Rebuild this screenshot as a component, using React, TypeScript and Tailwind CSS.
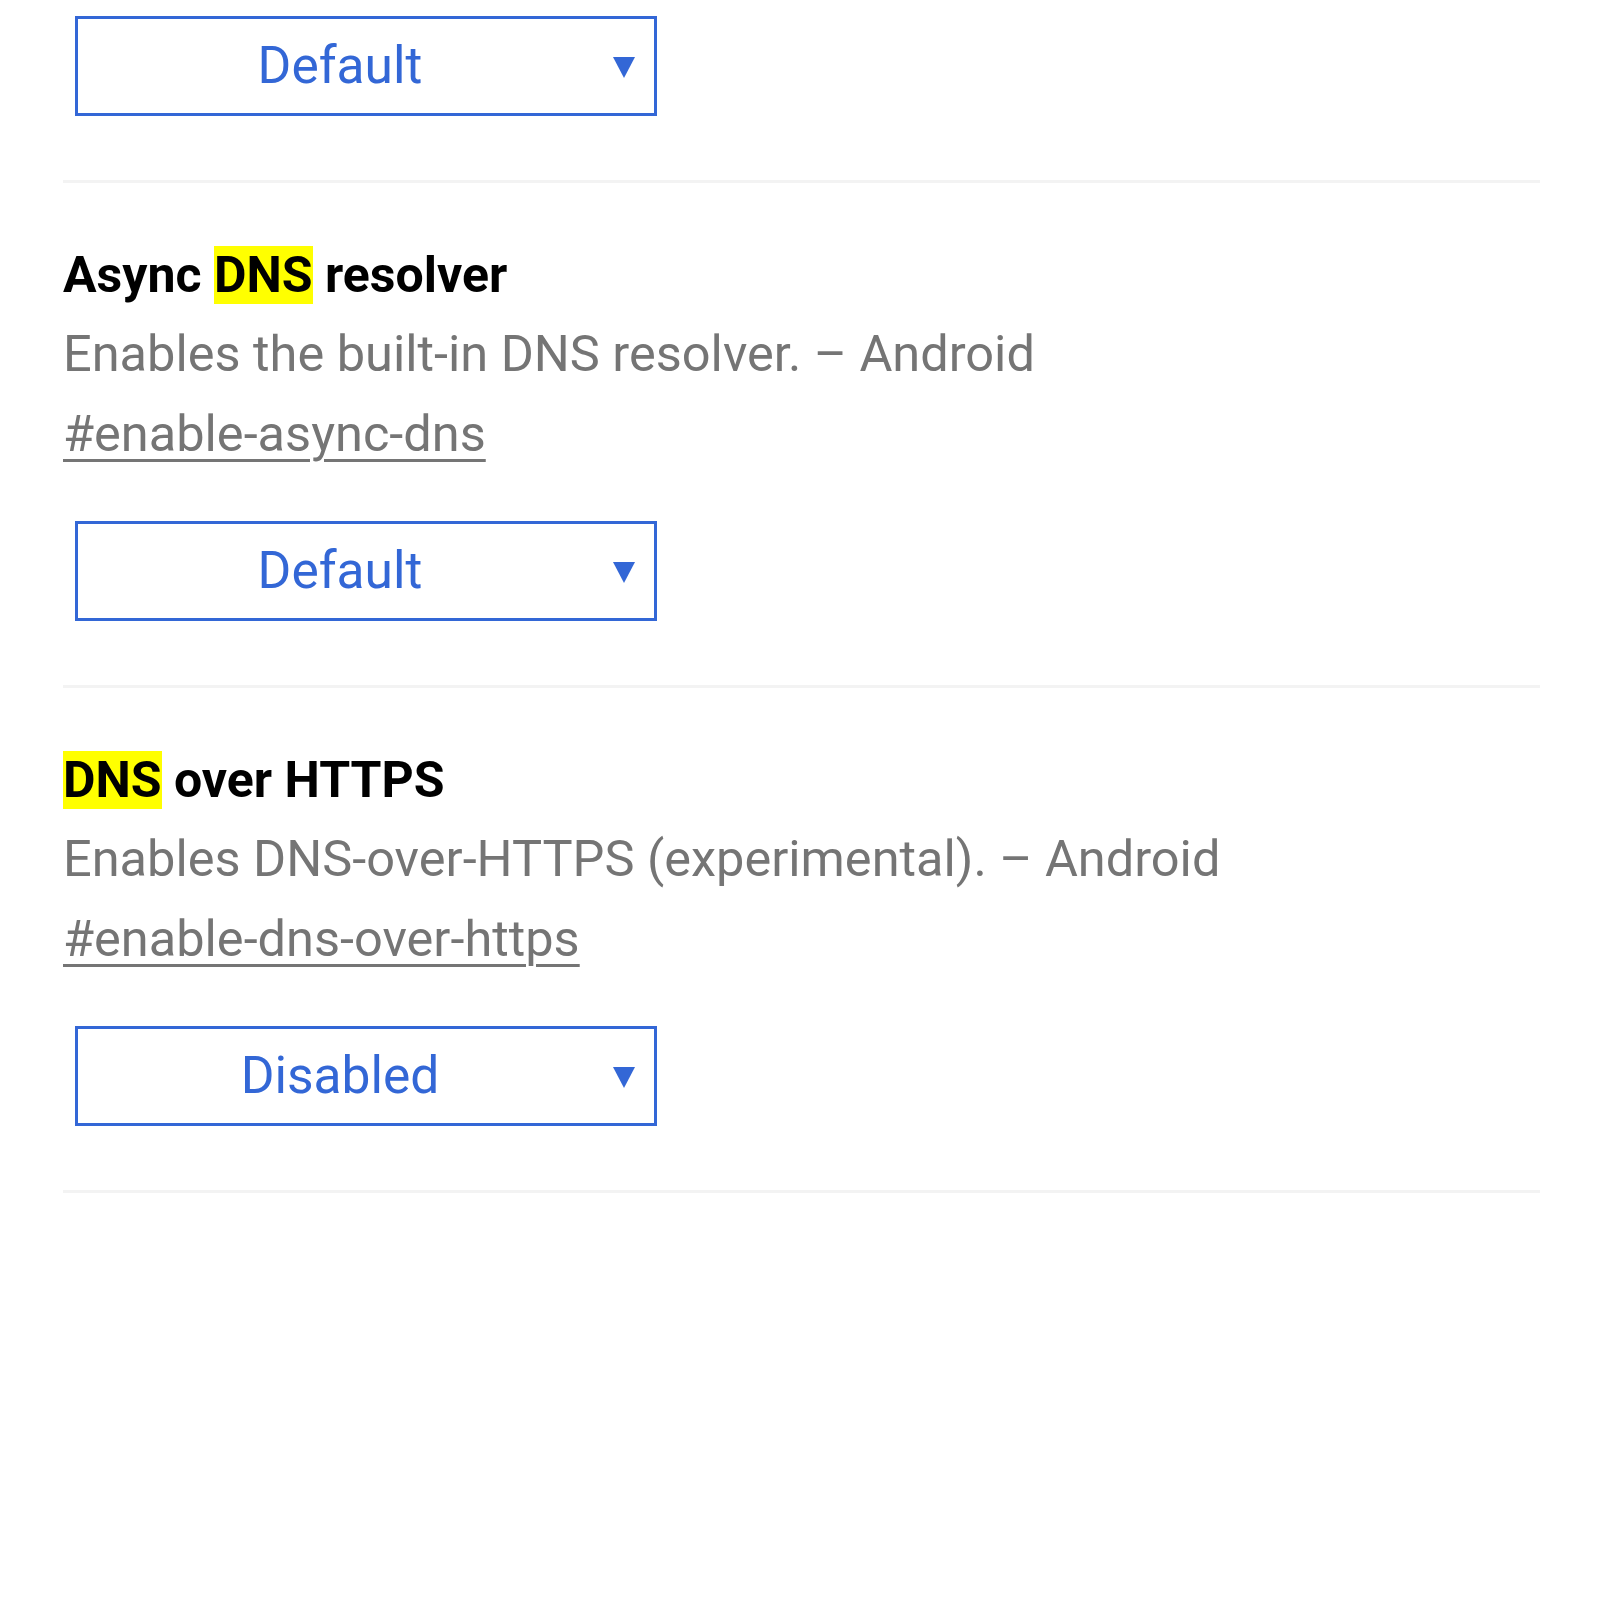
import React from "react";

type Flag = {
  before?: string;
  mark: string;
  after: string;
  description: string;
  anchor: string;
  value: string;
};

const flags: Flag[] = [
  {
    before: "Async ",
    mark: "DNS",
    after: " resolver",
    description: "Enables the built-in DNS resolver. – Android",
    anchor: "#enable-async-dns",
    value: "Default",
  },
  {
    mark: "DNS",
    after: " over HTTPS",
    description: "Enables DNS-over-HTTPS (experimental). – Android",
    anchor: "#enable-dns-over-https",
    value: "Disabled",
  },
];

function FlagSelect({ value }: { value: string }) {
  return (
    <div className="relative ml-[12px] flex h-[100px] w-[582px] items-center justify-center border-[3px] border-[#3367d6] pr-[52px] text-[51.5px] text-[#3367d6]">
      <span>{value}</span>
      {/* dropdown arrow */}
      <svg
        className="absolute right-[19px] top-[38px]"
        width="22"
        height="21"
        viewBox="0 0 22 21"
      >
        <path d="M0 0 H22 L11 21 Z" fill="#3367d6" />
      </svg>
    </div>
  );
}

export default function App() {
  return (
    <div
      className="min-h-[1600px] w-[1600px] bg-white pl-[63px] pr-[60px]"
      style={{ fontFamily: "Roboto, 'Noto Sans', sans-serif" }}
    >
      {/* tail of the previous entry */}
      <div className="border-b-[3px] border-[#f3f3f3] pb-[64px] pt-[16px]">
        <FlagSelect value="Default" />
      </div>

      {flags.map((flag) => (
        <div
          key={flag.anchor}
          className="border-b-[3px] border-[#f3f3f3] pb-[64px] pt-[63px]"
        >
          <h3 className="text-[50px] font-bold leading-[58px] text-black">
            {flag.before}
            <mark className="bg-[#ffff00] text-black">{flag.mark}</mark>
            {flag.after}
          </h3>
          <p className="mt-[20px] text-[50.5px] leading-[60px] text-[#757575]">
            {flag.description}
          </p>
          <a
            href={flag.anchor}
            className="mt-[20px] block w-fit text-[50.5px] leading-[60px] text-[#757575] underline decoration-[3px] underline-offset-[8px]"
          >
            {flag.anchor}
          </a>
          <div className="mt-[57px]">
            <FlagSelect value={flag.value} />
          </div>
        </div>
      ))}
    </div>
  );
}
